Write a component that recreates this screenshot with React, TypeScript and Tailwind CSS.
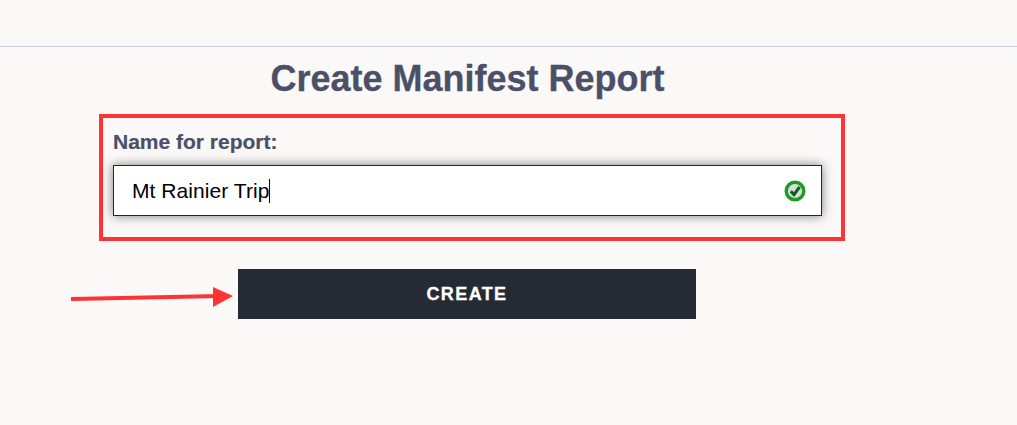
export default function App() {
  return (
    <div className="relative h-[425px] w-[1017px] overflow-hidden bg-[#fbf9f8] font-['Liberation_Sans',Arial,sans-serif]">
      <div className="h-[47px] border-b border-[#c9d0e3]" />
      <div className="ml-[99px] w-[746px]">
        <h1 className="mt-[11px] h-[56px] pr-[9px] text-center text-[36px] leading-[42px] font-bold text-[#4b5069] [-webkit-text-stroke:0.3px_#4b5069]">
          Create Manifest Report
        </h1>
        <div className="h-[127px] border-4 border-[#ff3333] pt-[9px] pl-[10px]">
          <div className="h-[38px] text-[21px] leading-[30px] font-bold text-[#4b5069] [-webkit-text-stroke:0.2px_#4b5069]">Name for report:</div>
          <div className="flex h-[51px] w-[709px] items-center justify-between border border-[#23262f] bg-white pr-[15px] pl-[18px] shadow-[0_0_10px_rgba(0,0,0,0.5)]">
            <div className="flex items-center text-[21px] tracking-[0.06px] text-black">
              <span>Mt Rainier Trip</span>
              <span className="h-[24px] w-px bg-black" />
            </div>
            <svg width="22" height="22" viewBox="0 0 22 22" className="blur-[0.5px]">
              <circle cx="11" cy="11" r="8.8" fill="#d5e0d2" stroke="#1f9a2a" strokeWidth="3.4" />
              <path d="M6.8 11.2 L10 14.6 L15.6 6.8" fill="none" stroke="#125a1a" strokeWidth="3" />
            </svg>
          </div>
        </div>
        <button className="mt-[28px] ml-[139px] flex h-[50px] w-[458px] items-center justify-center bg-[#262a35] text-[18px] font-bold tracking-[1.4px] text-white [-webkit-text-stroke:0.3px_white]">
          CREATE
        </button>
      </div>
      <svg className="absolute top-[284px] left-[70px]" width="166" height="26" viewBox="0 0 166 26">
        <path d="M1 15 L150 12" stroke="#ff3333" strokeWidth="4" fill="none" />
        <path d="M143 3 L163 12 L143 23 Z" fill="#ff3333" />
      </svg>
    </div>
  );
}
